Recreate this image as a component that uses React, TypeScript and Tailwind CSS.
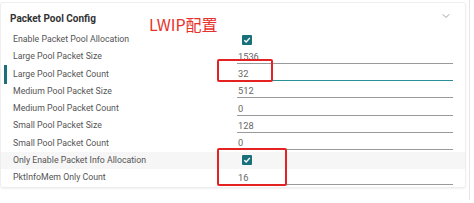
import { ChevronDown } from "lucide-react";

type Row = { label: string; kind: "check" | "num"; value?: string; active?: boolean; shaded?: boolean };

const rows: Row[] = [
  { label: "Enable Packet Pool Allocation", kind: "check" },
  { label: "Large Pool Packet Size", kind: "num", value: "1536" },
  { label: "Large Pool Packet Count", kind: "num", value: "32", active: true },
  { label: "Medium Pool Packet Size", kind: "num", value: "512" },
  { label: "Medium Pool Packet Count", kind: "num", value: "0" },
  { label: "Small Pool Packet Size", kind: "num", value: "128" },
  { label: "Small Pool Packet Count", kind: "num", value: "0" },
  { label: "Only Enable Packet Info Allocation", kind: "check", shaded: true },
  { label: "PktInfoMem Only Count", kind: "num", value: "16" },
];

function Check() {
  return (
    <div className="w-[10px] h-[10px] rounded-[1px] bg-[#18707a] flex items-center justify-center">
      <svg width="8" height="8" viewBox="0 0 8 8" fill="none">
        <path d="M1.3 4.2 L3.2 6 L6.8 2" stroke="white" strokeWidth="1.4" />
      </svg>
    </div>
  );
}

export default function App() {
  return (
    <div className="relative w-[474px] h-[203px] bg-white overflow-hidden text-[#555] font-['Roboto','Liberation_Sans',sans-serif]">
      <div className="flex">
        <div className="w-[466px] mt-[2px] h-[186px] rounded-[3px] border border-[#eeeeee] shadow-[0_1px_2px_rgba(0,0,0,0.06)] flex flex-col">
          <div className="h-[28px] flex items-center justify-between pl-[9px] pr-[13px] pt-[2px]">
            <span className="text-[10px] font-bold text-[#333]">Packet Pool Config</span>
            <ChevronDown size={12} strokeWidth={1.6} className="text-[#888] -mt-[5px]" />
          </div>
          {rows.map((r) => (
            <div
              key={r.label}
              className={`relative h-[17.25px] flex items-center ${r.shaded ? "bg-[#f6f6f6]" : ""}`}
            >
              {r.active && <div className="absolute left-[3px] top-[-1px] w-[3px] h-[19px] bg-[#1e6f7a]" />}
              <span className="w-[236px] pl-[12px] text-[8.75px] text-[#555]">{r.label}</span>
              {r.kind === "check" ? (
                <div className="pl-[5px]">
                  <Check />
                </div>
              ) : (
                <div
                  className={`w-[216px] h-[13px] mt-[1px] pl-[1px] text-[9.25px] leading-[12px] text-[#666] border-b ${
                    r.active ? "border-[#2a8f95] border-b-[1.5px]" : "border-[#9a9a9a]"
                  }`}
                >
                  {r.value}
                </div>
              )}
            </div>
          ))}
        </div>
        <div className="ml-[3px] w-[1px] h-[200px] bg-[#e6e6e6]" />
      </div>
      <div className="w-[466px] mt-[8px] h-[20px] rounded-[3px] border border-[#eeeeee]" />

      {/* red annotations */}
      <div className="absolute left-[149px] top-[13px] text-[16px] leading-[22px] text-[#e8322c] font-['Noto_Sans_CJK_SC',sans-serif]">
        LWIP配置
      </div>
      <div className="absolute left-[217px] top-[59px] w-[56px] h-[23px] border-2 border-[#e52222] rounded-[2px]" />
      <div className="absolute left-[217px] top-[148px] w-[70px] h-[38px] border-2 border-[#e52222] rounded-[2px]" />
    </div>
  );
}
